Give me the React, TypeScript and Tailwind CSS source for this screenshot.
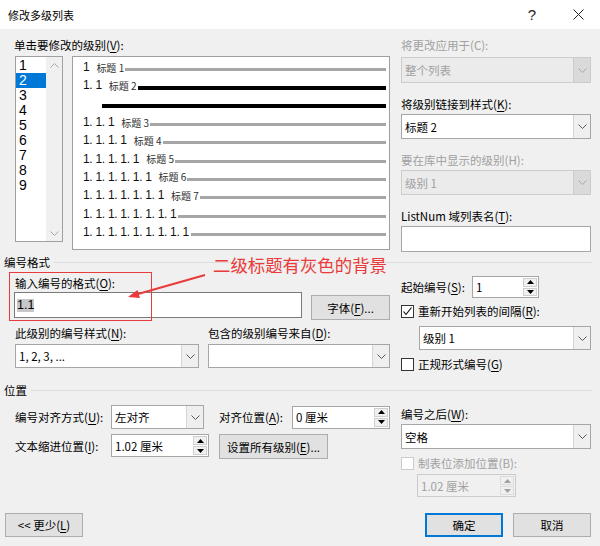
import React from 'react';

function U({ c }: { c: string }) {
  return <span className="underline underline-offset-[2px] decoration-[1px]">{c}</span>;
}

function Chevron({ disabled, up }: { disabled?: boolean; up?: boolean }) {
  return (
    <svg width="9" height="5" viewBox="0 0 9 5">
      <polyline
        points={up ? '0.5,4.5 4.5,0.5 8.5,4.5' : '0.5,0.5 4.5,4.5 8.5,0.5'}
        fill="none"
        stroke={disabled ? '#a8a8a8' : '#5a5a5a'}
        strokeWidth="1"
      />
    </svg>
  );
}

function Combo({ value, disabled, className = '' }: { value: string; disabled?: boolean; className?: string }) {
  return (
    <div
      className={`flex border ${
        disabled ? 'bg-[#ebebeb] border-[#cccccc] text-[#a0a0a0]' : 'bg-white border-[#a6a6a6] text-black'
      } ${className}`}
    >
      <div className="flex-1 flex items-center pl-[3px] leading-[16px] whitespace-nowrap overflow-hidden">{value}</div>
      <div
        className={`w-[17px] flex items-center justify-center border-l ${
          disabled ? 'bg-[#dadada] border-[#cccccc]' : 'bg-[#efefef] border-[#d4d4d4]'
        }`}
      >
        <Chevron disabled={disabled} />
      </div>
    </div>
  );
}

function Tri({ up, disabled }: { up?: boolean; disabled?: boolean }) {
  return (
    <svg width="7" height="4" viewBox="0 0 7 4">
      <polygon points={up ? '3.5,0 7,4 0,4' : '0,0 7,0 3.5,4'} fill={disabled ? '#a0a0a0' : '#000'} />
    </svg>
  );
}

function Spin({ value, disabled, className = '' }: { value: string; disabled?: boolean; className?: string }) {
  return (
    <div
      className={`flex border ${
        disabled ? 'bg-[#f0f0f0] border-[#cccccc] text-[#a0a0a0]' : 'bg-white border-[#a6a6a6] text-black'
      } ${className}`}
    >
      <div className="flex-1 flex items-center pl-[3px] leading-[16px] whitespace-nowrap">{value}</div>
      <div className="w-[16px] flex flex-col gap-[1px] p-[1px]">
        <div
          className={`flex-1 flex items-center justify-center border ${
            disabled ? 'bg-[#f0f0f0] border-[#dcdcdc]' : 'bg-[#f0f0f0] border-[#cfcfcf]'
          }`}
        >
          <Tri up disabled={disabled} />
        </div>
        <div
          className={`flex-1 flex items-center justify-center border ${
            disabled ? 'bg-[#f0f0f0] border-[#dcdcdc]' : 'bg-[#f0f0f0] border-[#cfcfcf]'
          }`}
        >
          <Tri disabled={disabled} />
        </div>
      </div>
    </div>
  );
}

function Button({ children, className = '', primary }: { children: React.ReactNode; className?: string; primary?: boolean }) {
  return (
    <div
      className={`bg-[#e1e1e1] flex items-center justify-center leading-[16px] whitespace-nowrap ${
        primary ? 'border-2 border-[#0078d7]' : 'border border-[#adadad]'
      } ${className}`}
    >
      {children}
    </div>
  );
}

function Check({ checked, disabled }: { checked?: boolean; disabled?: boolean }) {
  return (
    <div
      className={`w-[13px] h-[13px] border flex items-center justify-center ${
        disabled ? 'bg-white border-[#cccccc]' : 'bg-white border-[#333333]'
      }`}
    >
      {checked && (
        <svg width="11" height="11" viewBox="0 0 11 11">
          <polyline points="1.5,5.5 4,8.5 9.5,1.5" fill="none" stroke="#000" strokeWidth="1.1" />
        </svg>
      )}
    </div>
  );
}

type Row = { n?: number; t?: string; black?: boolean; lineOnly?: boolean };

const rows: Row[] = [
  { n: 1, t: '1' },
  { n: 2, t: '2', black: true },
  { lineOnly: true },
  { n: 3, t: '3' },
  { n: 4, t: '4' },
  { n: 5, t: '5' },
  { n: 6, t: '6' },
  { n: 7, t: '7' },
  { n: 8 },
  { n: 9 },
];

function Preview() {
  return (
    <div className="ml-[9px] w-[318px] h-[194px] border border-[#a0a0a0] bg-white pl-[10px] pr-[3px] pt-[1px]">
      {rows.map((r, i) => (
        <div key={i} className="flex items-center h-[18.3px]">
          {r.lineOnly ? (
            <div className="ml-[19px] flex-1 h-[4px] mt-[5px] bg-black" />
          ) : (
            <>
              <span className="font-['Liberation_Sans',sans-serif] text-[12px] tracking-[-0.3px] leading-[18px] text-[#111] whitespace-nowrap">
                {Array(r.n).fill('1').join('. ')}
              </span>
              {r.t && (
                <span className="ml-[7px] text-[10px] leading-[18px] text-[#303030] whitespace-nowrap mt-[1px]">
                  标题 {r.t}
                </span>
              )}
              <div
                className={`flex-1 ${r.t ? 'ml-[1px]' : 'ml-[2px]'} ${
                  r.black ? 'h-[4px] bg-black mt-[5px]' : 'h-[3px] bg-[#a6a6a6] mt-[5px]'
                }`}
              />
            </>
          )}
        </div>
      ))}
    </div>
  );
}

function ListBox() {
  const items = ['1', '2', '3', '4', '5', '6', '7', '8', '9'];
  return (
    <div className="ml-[1px] w-[48px] h-[186px] border border-[#a0a0a0] bg-white flex">
      <div className="flex-1 pt-[1px]">
        {items.map((it) => (
          <div
            key={it}
            className={`h-[15px] pl-[3px] flex items-center text-[14px] leading-[15px] font-['Liberation_Sans',sans-serif] ${
              it === '2' ? 'bg-[#0078d7] text-white' : 'text-black'
            }`}
          >
            {it}
          </div>
        ))}
      </div>
      <div className="w-[16px] bg-[#f0f0f0] flex flex-col justify-between items-center">
        <div className="h-[16px] flex items-center justify-center">
          <Chevron up disabled />
        </div>
        <div className="h-[16px] flex items-center justify-center">
          <Chevron disabled />
        </div>
      </div>
    </div>
  );
}

function SectionHeader({ title, mt }: { title: string; mt: string }) {
  return (
    <div className={`flex items-center h-[16px] ${mt}`}>
      <div className="pl-[4px] leading-[16px]">{title}</div>
      <div className="flex-1 h-px bg-[#dcdcdc] ml-[4px] mr-[8px]" />
    </div>
  );
}

export default function App() {
  return (
    <div className="relative w-[600px] h-[546px] bg-[#f0f0f0] flex flex-col text-[11.5px] text-black overflow-hidden font-['Microsoft_YaHei_UI','Noto_Sans_CJK_SC',sans-serif]">
      {/* Title bar */}
      <div className="h-[29px] shrink-0 bg-white flex items-center">
        <div className="pl-[8px] leading-[16px] text-[11px]">修改多级列表</div>
        <div className="flex-1" />
        <div className="w-[28px] flex justify-center text-[15px] leading-[16px] text-[#222] font-['Liberation_Sans',sans-serif]">?</div>
        <div className="w-[28px] ml-[18px] mr-[8px] flex justify-center">
          <svg width="11" height="11" viewBox="0 0 11 11">
            <line x1="0.5" y1="0.5" x2="10.5" y2="10.5" stroke="#222" strokeWidth="1" />
            <line x1="10.5" y1="0.5" x2="0.5" y2="10.5" stroke="#222" strokeWidth="1" />
          </svg>
        </div>
      </div>

      {/* Top section */}
      <div className="flex pt-[8px]">
        <div className="ml-[14px] w-[376px] flex flex-col">
          <div className="h-[16px] leading-[16px]">
            单击要修改的级别(<U c="V" />):
          </div>
          <div className="flex mt-[3px]">
            <ListBox />
            <Preview />
          </div>
        </div>
        <div className="ml-[11px] w-[190px] flex flex-col">
          <div className="h-[16px] leading-[16px] text-[#a0a0a0]">将更改应用于(C):</div>
          <Combo className="mt-[4px] h-[26px]" value="整个列表" disabled />
          <div className="mt-[13px] h-[16px] leading-[16px]">
            将级别链接到样式(<U c="K" />):
          </div>
          <Combo className="mt-[2px] h-[25px]" value="标题 2" />
          <div className="mt-[13px] h-[16px] leading-[16px] text-[#a0a0a0]">要在库中显示的级别(H):</div>
          <Combo className="mt-[2px] h-[25px]" value="级别 1" disabled />
          <div className="mt-[13px] h-[16px] leading-[16px]">
            ListNum 域列表名(<U c="T" />):
          </div>
          <div className="mt-[2px] h-[26px] bg-white border border-[#a6a6a6]" />
        </div>
      </div>

      <SectionHeader title="编号格式" mt="mt-[2px]" />

      {/* Number format section */}
      <div className="flex">
        <div className="ml-[14px] w-[376px] flex flex-col">
          <div className="mt-[5px] h-[16px] leading-[16px] pl-[1px]">
            输入编号的格式(<U c="O" />):
          </div>
          <div className="flex items-start mt-[1px]">
            <div className="w-[289px] h-[26px] bg-white border border-[#7a7a7a] flex items-center pl-[2px]">
              <span className="bg-[#c8c8c8] font-['Liberation_Sans',sans-serif] text-[12.5px] leading-[13px]">1.1</span>
            </div>
            <Button className="ml-[9px] mt-[3px] w-[79px] h-[25px]">
              字体(<U c="F" />)...
            </Button>
          </div>
          <div className="flex">
            <div className="ml-[1px] w-[184px] flex flex-col">
              <div className="mt-[5px] h-[16px] leading-[16px]">
                此级别的编号样式(<U c="N" />):
              </div>
              <Combo className="mt-[3px] h-[24px]" value="1, 2, 3, ..." />
            </div>
            <div className="ml-[9px] w-[182px] flex flex-col">
              <div className="mt-[5px] h-[16px] leading-[16px]">
                包含的级别编号来自(<U c="D" />):
              </div>
              <Combo className="mt-[3px] h-[24px]" value="" />
            </div>
          </div>
        </div>
        <div className="ml-[11px] w-[190px] flex flex-col">
          <div className="flex items-center mt-[6px] h-[22px]">
            <div className="w-[71px] leading-[16px]">
              起始编号(<U c="S" />):
            </div>
            <Spin className="w-[67px] h-[22px]" value="1" />
          </div>
          <div className="flex items-center mt-[6px] h-[14px]">
            <Check checked />
            <div className="ml-[4px] leading-[16px]">
              重新开始列表的间隔(<U c="R" />):
            </div>
          </div>
          <Combo className="mt-[8px] ml-[18px] w-[172px] h-[24px]" value="级别 1" />
          <div className="flex items-center mt-[7px] h-[14px]">
            <Check />
            <div className="ml-[4px] leading-[16px]">
              正规形式编号(<U c="G" />)
            </div>
          </div>
        </div>
      </div>

      <SectionHeader title="位置" mt="mt-[11px]" />

      {/* Position section */}
      <div className="flex">
        <div className="ml-[14px] w-[376px] flex flex-col">
          <div className="flex items-center mt-[7px] h-[24px]">
            <div className="w-[97px] pl-[1px] leading-[16px]">
              编号对齐方式(<U c="U" />):
            </div>
            <Combo className="w-[93px] h-[24px]" value="左对齐" />
            <div className="ml-[15px] w-[73px] leading-[16px]">
              对齐位置(<U c="A" />):
            </div>
            <Spin className="w-[98px] h-[23px]" value="0 厘米" />
          </div>
          <div className="flex items-start mt-[5px]">
            <div className="w-[97px] h-[23px] pl-[1px] flex items-center leading-[16px]">
              文本缩进位置(<U c="I" />):
            </div>
            <Spin className="w-[98px] h-[23px]" value="1.02 厘米" />
            <Button className="ml-[10px] w-[109px] h-[25px]">
              设置所有级别(<U c="E" />)...
            </Button>
          </div>
        </div>
        <div className="ml-[11px] w-[190px] flex flex-col">
          <div className="mt-[8px] h-[16px] leading-[16px]">
            编号之后(<U c="W" />):
          </div>
          <Combo className="mt-[2px] h-[25px]" value="空格" />
          <div className="flex items-center mt-[7px] h-[14px]">
            <Check disabled />
            <div className="ml-[4px] leading-[16px] text-[#a0a0a0]">制表位添加位置(B):</div>
          </div>
          <Spin className="mt-[4px] ml-[16px] w-[99px] h-[23px]" value="1.02 厘米" disabled />
        </div>
      </div>

      {/* Bottom buttons */}
      <div className="mt-auto mb-[9px] flex h-[24px]">
        <Button className="ml-[5px] w-[78px] h-[24px]">
          &lt;&lt; 更少(<U c="L" />)
        </Button>
        <div className="flex-1" />
        <Button primary className="w-[78px] h-[24px]">
          确定
        </Button>
        <Button className="ml-[10px] mr-[9px] w-[78px] h-[24px]">取消</Button>
      </div>

      {/* Red annotation overlay */}
      <div className="absolute left-[9px] top-[272px] w-[143px] h-[49px] border-[1.5px] border-[#e83b3b] pointer-events-none" />
      <div className="absolute left-[213px] top-[254px] text-[17.4px] leading-[22px] text-[#ea3b3b] whitespace-nowrap pointer-events-none">
        二级标题有灰色的背景
      </div>
      <svg className="absolute left-0 top-0 pointer-events-none" width="600" height="546" viewBox="0 0 600 546">
        <line x1="205" y1="275" x2="138" y2="294" stroke="#e83b3b" strokeWidth="2" />
        <polygon points="128,297 137.5,290 140,298" fill="#e83b3b" />
      </svg>
    </div>
  );
}
